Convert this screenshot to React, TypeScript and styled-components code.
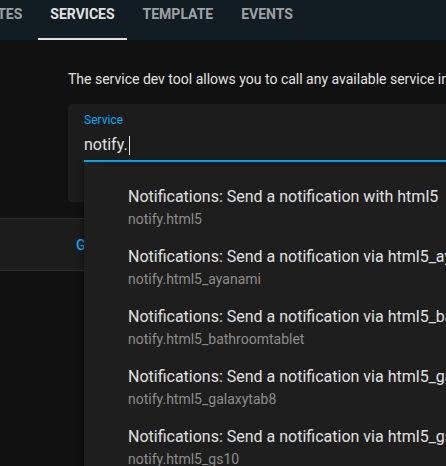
import styled, { createGlobalStyle } from 'styled-components'

const GlobalStyle = createGlobalStyle`
  html, body {
    margin: 0;
    padding: 0;
    background: #111111;
    font-family: Roboto, "Noto Sans", sans-serif;
    overflow: hidden;
  }
`

const tabs = ['States', 'Services', 'Template', 'Events']

const suggestions = [
    { title: 'Notifications: Send a notification with html5', id: 'notify.html5' },
    { title: 'Notifications: Send a notification via html5_ayanami', id: 'notify.html5_ayanami' },
    { title: 'Notifications: Send a notification via html5_bathroomtablet', id: 'notify.html5_bathroomtablet' },
    { title: 'Notifications: Send a notification via html5_galaxytab8', id: 'notify.html5_galaxytab8' },
    { title: 'Notifications: Send a notification via html5_gs10', id: 'notify.html5_gs10' },
]

const App = () => {
    return (
        <>
            <GlobalStyle />
            <Page>
                <TabBar>
                    <TabRow>
                        {tabs.map((t) => (
                            <Tab key={t} $active={t === 'Services'}>{t}</Tab>
                        ))}
                    </TabRow>
                </TabBar>
                <Content>
                    <Description>
                        The service dev tool allows you to call any available service in Home Assistant.
                    </Description>
                    <Card>
                        <Field>
                            <FieldLabel>Service</FieldLabel>
                            <FieldInput>
                                notify.<Caret />
                            </FieldInput>
                        </Field>
                    </Card>
                </Content>
                <ActionBar>
                    <TextButton>Go to YAML mode</TextButton>
                </ActionBar>
                <Dropdown>
                    {suggestions.map((s) => (
                        <Item key={s.id}>
                            <ItemTitle>{s.title}</ItemTitle>
                            <ItemId>{s.id}</ItemId>
                        </Item>
                    ))}
                </Dropdown>
            </Page>
        </>
    )
}

const Page = styled.div`
  position: relative;
  width: 446px;
  height: 466px;
  overflow: hidden;
  background: #111111;
`

const TabBar = styled.div`
  height: 40px;
  background: #111d23;
  overflow: hidden;
`

const TabRow = styled.div`
  display: flex;
  gap: 4px;
  margin-left: -40px;
  height: 40px;
`

const Tab = styled.div<{ $active?: boolean }>`
  display: flex;
  align-items: center;
  box-sizing: border-box;
  height: 40px;
  padding: 0 12px 10px;
  font-size: 14px;
  font-weight: 700;
  text-transform: uppercase;
  white-space: nowrap;
  color: ${(p) => (p.$active ? '#e1e1e1' : '#9ea1a3')};
  border-bottom: 2px solid ${(p) => (p.$active ? '#e1e1e1' : 'transparent')};
`

const Content = styled.div`
  padding: 29px 0 0 68px;
`

const Description = styled.p`
  margin: 0;
  font-size: 14px;
  line-height: 20px;
  color: #e1e1e1;
  white-space: nowrap;
`

const Card = styled.div`
  margin-top: 15px;
  width: 420px;
  padding: 8px 0 40px 16px;
  background: #1c1c1c;
  border-radius: 4px;
`

const Field = styled.div`
  border-bottom: 2px solid #03a9f4;
  padding-bottom: 3px;
`

const FieldLabel = styled.div`
  font-size: 12px;
  line-height: 16px;
  color: #03a9f4;
`

const FieldInput = styled.div`
  margin-top: 5px;
  display: flex;
  align-items: center;
  font-size: 16px;
  line-height: 24px;
  color: #e1e1e1;
`

const Caret = styled.span`
  display: inline-block;
  width: 1px;
  height: 19px;
  margin-left: 1px;
  background: #e1e1e1;
`

const ActionBar = styled.div`
  margin-top: 16px;
  height: 51px;
  display: flex;
  align-items: center;
  padding-left: 76px;
  background: #1c1c1c;
  border-top: 1px solid #2f2f2f;
  border-bottom: 1px solid #2f2f2f;
`

const TextButton = styled.span`
  font-size: 14px;
  font-weight: 500;
  text-transform: uppercase;
  letter-spacing: 0.06em;
  color: #03a9f4;
  white-space: nowrap;
`

const Dropdown = styled.div`
  position: absolute;
  top: 162px;
  left: 84px;
  width: 400px;
  bottom: -20px;
  padding-top: 15px;
  background: #1e1e1e;
  box-shadow: -1px 2px 4px rgba(0, 0, 0, 0.5);
`

const Item = styled.div`
  box-sizing: border-box;
  height: 60px;
  padding: 8px 0 8px 44px;
  white-space: nowrap;
`

const ItemTitle = styled.div`
  font-size: 16px;
  line-height: 24px;
  color: #e1e1e1;
`

const ItemId = styled.div`
  font-size: 14px;
  line-height: 20px;
  color: #8c8c8c;
`

export default App
